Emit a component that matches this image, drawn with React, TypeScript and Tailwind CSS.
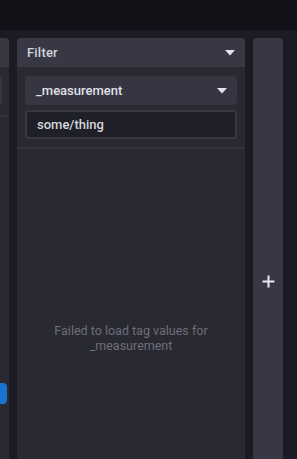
import React from "react";

const font = { fontFamily: "Roboto, 'Open Sans', sans-serif" };

function Caret() {
  return (
    <svg width="10" height="6" viewBox="0 0 10 6" className="shrink-0">
      <path d="M0 0 H10 L5 5.5 Z" fill="#e4e4ec" />
    </svg>
  );
}

export default function App() {
  return (
    <div className="w-[297px] h-[459px] bg-[#111117] overflow-hidden flex flex-col" style={font}>
      <div className="h-[30px] shrink-0" />
      <div className="flex-1 bg-[#1b1b23] flex pt-[8px] gap-[8px]">
        {/* left panel, mostly clipped */}
        <div className="w-[9px] shrink-0 flex flex-col rounded-tr-[4px] overflow-hidden">
          <div className="h-[29px] bg-[#383844]" />
          <div className="flex-1 bg-[#292931] flex flex-col">
            <div className="mt-[9px] h-[29px] w-[2px] bg-[#363642] rounded-r-[4px]" />
            <div className="h-[10px]" />
            <div className="h-[2px] bg-[#33333d]" />
            <div className="h-[266px]" />
            <div className="h-[21px] w-[7px] bg-[#1a73d1] rounded-r-[4px]" />
          </div>
        </div>

        {/* filter panel */}
        <div className="w-[228px] shrink-0 flex flex-col rounded-t-[4px] overflow-hidden">
          <div className="h-[29px] bg-[#383844] flex items-center justify-between pl-[10px] pr-[10px]">
            <span className="text-[13px] font-medium text-[#d3d3dc] tracking-[0.2px]">Filter</span>
            <Caret />
          </div>
          <div className="flex-1 bg-[#292931] flex flex-col">
            <div className="px-[8px] pt-[9px] flex flex-col gap-[5px]">
              <div className="h-[29px] bg-[#363642] rounded-[4px] flex items-center justify-between pl-[11px] pr-[10px]">
                <span className="text-[13px] font-medium text-[#e0e0e8]">_measurement</span>
                <Caret />
              </div>
              <div className="h-[29px] bg-[#1f1f27] border-2 border-[#383844] rounded-[4px] flex items-center pl-[10px]">
                <span className="text-[13px] font-medium text-[#d6d6de]">some/thing</span>
              </div>
            </div>
            <div className="mt-[8px] h-[2px] bg-[#33333d]" />
            <div className="flex-1 flex flex-col items-center pt-[174px] text-center text-[12.5px] leading-[15px] text-[#6e6e7c]">
              <span>Failed to load tag values for</span>
              <span>_measurement</span>
            </div>
          </div>
        </div>

        {/* add column */}
        <div className="w-[30px] shrink-0 bg-[#383844] rounded-t-[4px] flex justify-center pt-[237px]">
          <svg width="13" height="13" viewBox="0 0 13 13">
            <path d="M6.5 0.5 V12.5 M0.5 6.5 H12.5" stroke="#e8e8f0" strokeWidth="2" />
          </svg>
        </div>
      </div>
    </div>
  );
}
